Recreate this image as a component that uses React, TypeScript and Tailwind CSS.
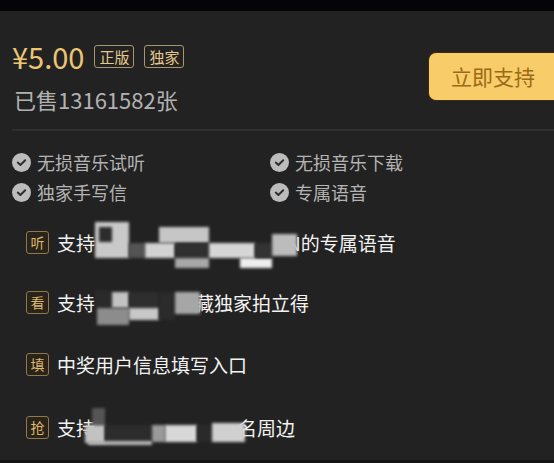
import React from "react";

type Block = [number, number, number, number, string];

function Mosaic({ width, blocks }: { width: number; blocks: Block[] }) {
  return (
    <span className="relative inline-block h-[24px] shrink-0" style={{ width }}>
      {blocks.map(([x, y, w, h, c], i) => (
        <span
          key={i}
          className="absolute blur-[1.5px]"
          style={{ left: x, top: y, width: w, height: h, background: c }}
        />
      ))}
    </span>
  );
}

function Check() {
  return (
    <svg width="19" height="19" viewBox="0 0 19 19" className="shrink-0">
      <circle cx="9.5" cy="9.5" r="9.5" fill="#bcbcbc" />
      <path d="M5.8 9.6 L8.4 12 L13.2 7.2" fill="none" stroke="#2e2e2e" strokeWidth="2" strokeLinecap="round" strokeLinejoin="round" />
    </svg>
  );
}

function Tag({ t }: { t: string }) {
  return (
    <span className="flex h-[23px] w-[23px] shrink-0 items-center justify-center rounded-[3px] border border-[#8f7a4e] bg-[#29231a] text-[14px] leading-none text-[#dcb870]">
      {t}
    </span>
  );
}

function Feature({ t }: { t: string }) {
  return (
    <div className="flex h-[30px] items-center gap-[6px]">
      <Check />
      <span className="text-[18px] leading-none text-[#b4b4b4]">{t}</span>
    </div>
  );
}

const row1: Block[] = [
  [0, -8, 34, 36, "#c9c9c9"],
  [4, -3, 13, 15, "#2c2c2c"],
  [34, 13, 16, 15, "#545454"],
  [50, 13, 30, 15, "#d2d2d2"],
  [64, -3, 50, 16, "#c6c6c6"],
  [80, 13, 34, 15, "#303030"],
  [80, 28, 34, 10, "#a8a8a8"],
  [114, 13, 46, 15, "#d6d6d6"],
  [145, 28, 32, 10, "#eeeeee"],
  [160, 13, 17, 15, "#333333"],
  [177, 4, 25, 22, "#bcbcbc"],
];

const row2: Block[] = [
  [0, 0, 17, 18, "#2a2a2a"],
  [17, 2, 17, 16, "#c2c2c2"],
  [2, 18, 32, 17, "#8c8c8c"],
  [34, 2, 30, 16, "#2e2e2e"],
  [34, 18, 30, 12, "#c8c8c8"],
  [64, 2, 16, 28, "#2b2b2b"],
  [80, 2, 25, 22, "#a6a6a6"],
];

const row4: Block[] = [
  [-3, -7, 13, 17, "#555555"],
  [-10, 10, 20, 18, "#c2c2c2"],
  [10, 10, 47, 17, "#2c2c2c"],
  [-7, 26, 64, 4, "#bbbbbb"],
  [57, 10, 13, 17, "#9a9a9a"],
  [70, 10, 32, 17, "#d8d8d8"],
  [102, 10, 15, 17, "#2a2a2a"],
  [117, 8, 33, 19, "#d0d0d0"],
];

export default function App() {
  return (
    <div
      className="flex h-[463px] w-[554px] flex-col overflow-hidden bg-[#222222]"
      style={{ fontFamily: '"Noto Sans CJK SC", "Noto Sans", sans-serif' }}
    >
      <div className="h-[11px] shrink-0 bg-[#050507]" />

      <div className="flex h-[118px] shrink-0 justify-between pl-3">
        <div className="flex flex-col pt-[30px]">
          <div className="flex h-[30px] items-center">
            <span className="text-[29px] leading-none text-[#ecc574]">¥5.00</span>
            <span className="ml-[10px] flex h-[23px] items-center rounded-[3px] border border-[#a8966c] px-[4px] text-[15px] leading-none text-[#e4c88c]">
              正版
            </span>
            <span className="ml-[10px] flex h-[23px] items-center rounded-[3px] border border-[#a8966c] px-[4px] text-[15px] leading-none text-[#e4c88c]">
              独家
            </span>
          </div>
          <div className="mt-[16px] flex h-[24px] items-center pl-[2px] text-[22px] leading-none text-[#b2b2b2]">
            已售13161582张
          </div>
        </div>
        <div className="pt-[41px]">
          <div className="flex h-[49px] w-[126px] items-center rounded-l-[8px] border border-r-0 border-[#3a2c12] bg-[#f8cc68] pl-[22px] text-[21px] leading-none text-[#9a6a16]">
            立即支持
          </div>
        </div>
      </div>

      <div className="ml-3 h-[2px] shrink-0 bg-[#303030]" />

      <div className="grid grid-cols-[258px_1fr] pl-3 pt-[16px]">
        <Feature t="无损音乐试听" />
        <Feature t="无损音乐下载" />
        <Feature t="独家手写信" />
        <Feature t="专属语音" />
      </div>

      <div className="flex flex-col pl-[26px] pt-[23px] text-[19px] leading-none text-[#f2f2f2]">
        <div className="flex h-[24px] items-center">
          <Tag t="听" />
          <span className="ml-[8px]">支持</span>
          <Mosaic width={192} blocks={row1} />
          <span>N的专属语音</span>
        </div>
        <div className="mt-[36px] flex h-[24px] items-center">
          <Tag t="看" />
          <span className="ml-[8px]">支持</span>
          <Mosaic width={100} blocks={row2} />
          <span>藏独家拍立得</span>
        </div>
        <div className="mt-[38px] flex h-[24px] items-center">
          <Tag t="填" />
          <span className="ml-[8px]">中奖用户信息填写入口</span>
        </div>
        <div className="mt-[39px] flex h-[24px] items-center">
          <Tag t="抢" />
          <span className="ml-[8px]">支持</span>
          <Mosaic width={143} blocks={row4} />
          <span>名周边</span>
        </div>
      </div>

      <div className="mt-auto h-[3px] shrink-0 bg-[#141414]" />
    </div>
  );
}
